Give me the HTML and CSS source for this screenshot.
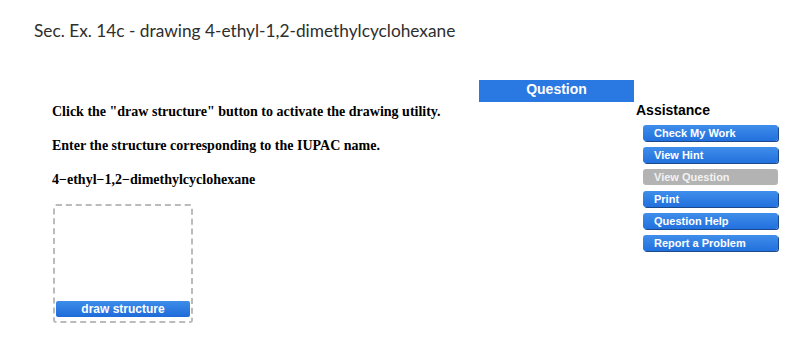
FILE: index.html
```html
<!DOCTYPE html>
<html lang="en">
<head>
  <meta charset="UTF-8" />
  <title>Sec. Ex. 14c - drawing 4-ethyl-1,2-dimethylcyclohexane</title>
  <link rel="stylesheet" href="styles.css">
</head>
<body>
  <header class="page-title">Sec. Ex. 14c - drawing 4-ethyl-1,2-dimethylcyclohexane</header>

  <div class="layout">
    <main class="question">
      <div class="tab-row">
        <div class="tab">Question</div>
      </div>
      <div class="question-body">
        <p>Click the "draw structure" button to activate the drawing utility.</p>
        <p>Enter the structure corresponding to the IUPAC name.</p>
        <p>4&minus;ethyl&minus;1,2&minus;dimethylcyclohexane</p>
        <div class="draw-box">
          <button class="draw-btn">draw structure</button>
        </div>
      </div>
    </main>

    <aside class="assist">
      <h2>Assistance</h2>
      <ul class="assist-list">
        <li><button class="assist-btn">Check My Work</button></li>
        <li><button class="assist-btn">View Hint</button></li>
        <li><button class="assist-btn disabled">View Question</button></li>
        <li><button class="assist-btn">Print</button></li>
        <li><button class="assist-btn">Question Help</button></li>
        <li><button class="assist-btn">Report a Problem</button></li>
      </ul>
    </aside>
  </div>
</body>
</html>
```

FILE: styles.css
```css
/* Reset and basics */
* {
  box-sizing: border-box;
}
body {
  margin: 0;
  background: #fff;
  color: #000;
  font-family: "Liberation Sans", Arial, sans-serif;
}

.page-title {
  padding: 21px 0 0 34px;
  height: 80px;
  font-family: Lato, "Liberation Sans", sans-serif;
  font-size: 17.3px;
  line-height: 20px;
  color: #2e2e2e;
}

.layout {
  display: flex;
}

/* Question column */
.question {
  width: 600px;
  margin-left: 34px;
}
.tab-row {
  display: flex;
  justify-content: flex-end;
}
.tab {
  width: 155px;
  height: 22px;
  background: #2a78e1;
  color: #fff;
  font-weight: bold;
  font-size: 14px;
  line-height: 19px;
  text-align: center;
}
.question-body {
  padding-left: 18px;
  font-family: "Liberation Serif", "Times New Roman", serif;
  font-weight: bold;
  font-size: 14px;
  line-height: 20px;
}
.question-body p {
  margin: 0 0 14px 0;
}

.draw-box {
  width: 140px;
  height: 119px;
  margin: 2px 0 0 1px;
  padding: 0 1px 4px 1px;
  border: 2px dashed #bbb;
  border-radius: 3px;
  display: flex;
  flex-direction: column;
  justify-content: flex-end;
}
.draw-btn {
  height: 16px;
  padding: 0;
  border: none;
  border-radius: 2px;
  background: linear-gradient(#3d8de9, #1e6bd9);
  color: #fff;
  font-family: "Liberation Sans", Arial, sans-serif;
  font-weight: bold;
  font-size: 12px;
  line-height: 16px;
}

/* Assistance column */
.assist {
  margin-top: 22px;
  margin-left: 2px;
  width: 146px;
}
.assist h2 {
  margin: 0;
  font-size: 14px;
  line-height: 16px;
  font-weight: bold;
}
.assist-list {
  list-style: none;
  margin: 7px 0 0 7px;
  padding: 0;
  display: flex;
  flex-direction: column;
  gap: 6px;
}
.assist-btn {
  display: block;
  width: 135px;
  height: 16px;
  padding: 0 0 0 11px;
  border: none;
  border-radius: 3px;
  background: linear-gradient(#3f8eea, #2270dd);
  box-shadow: 1px 1px 0 #1b4a8a;
  color: #fff;
  font-family: "Liberation Sans", Arial, sans-serif;
  font-weight: bold;
  font-size: 11px;
  line-height: 16px;
  text-align: left;
}
.assist-btn.disabled {
  background: #b3b3b3;
  box-shadow: none;
  color: #f2f2f2;
}
```
